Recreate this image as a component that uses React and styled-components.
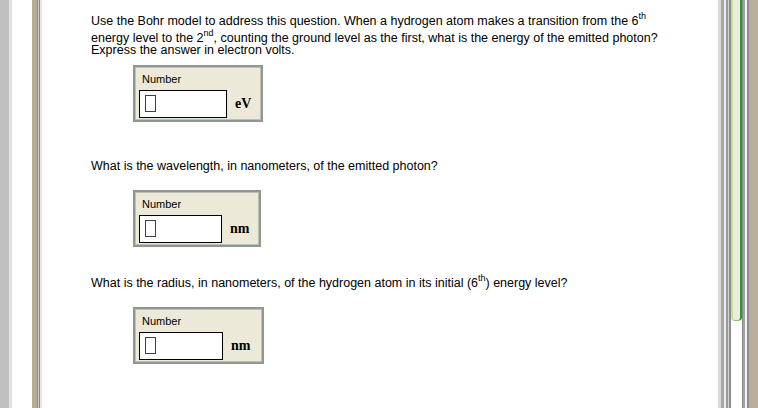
import React from "react";
import styled, { createGlobalStyle } from "styled-components";

const GlobalStyle = createGlobalStyle`
  html, body {
    margin: 0;
    padding: 0;
    background: #ffffff;
    overflow: hidden;
  }
`;

const questions = [
  {
    id: 1,
    text: (
      <>
        Use the Bohr model to address this question. When a hydrogen atom makes a
        transition from the 6<sup>th</sup>
        <br />
        energy level to the 2<sup>nd</sup>, counting the ground level as the first,
        what is the energy of the emitted photon?
        <br />
        Express the answer in electron volts.
      </>
    ),
    unit: "eV",
    top: 10,
    gap: 9,
    boxWidth: 130,
    inputWidth: 88,
  },
  {
    id: 2,
    text: <>What is the wavelength, in nanometers, of the emitted photon?</>,
    unit: "nm",
    top: 38,
    gap: 18,
    boxWidth: 128,
    inputWidth: 83,
  },
  {
    id: 3,
    text: (
      <>
        What is the radius, in nanometers, of the hydrogen atom in its initial (6
        <sup>th</sup>) energy level?
      </>
    ),
    unit: "nm",
    top: 25,
    gap: 18,
    boxWidth: 131,
    inputWidth: 84,
  },
];

function App() {
  return (
    <>
      <GlobalStyle />
      <Window>
        <LeftChrome />
        <Content>
          {questions.map((q) => (
            <Section key={q.id} $top={q.top}>
              <Question>{q.text}</Question>
              <AnswerBox $gap={q.gap} $width={q.boxWidth}>
                <Label>Number</Label>
                <AnswerRow>
                  <Input $width={q.inputWidth}>
                    <Caret />
                  </Input>
                  <Unit>{q.unit}</Unit>
                </AnswerRow>
              </AnswerBox>
            </Section>
          ))}
        </Content>
        <RightChrome>
          <OuterStripes />
          <Track>
            <Thumb />
          </Track>
          <InnerStripes />
        </RightChrome>
      </Window>
    </>
  );
}

export default App;

const Window = styled.div`
  display: flex;
  width: 758px;
  height: 408px;
  overflow: hidden;
  background: #ffffff;
`;

const LeftChrome = styled.div`
  flex: 0 0 42px;
  height: 100%;
  background: linear-gradient(
    90deg,
    #c0c0c0 0,
    #c0c0c0 9px,
    #e2e2e2 9px,
    #e2e2e2 12px,
    #ffffff 12px,
    #ffffff 32px,
    #b7ab94 32px,
    #b7ab94 37px,
    #8c8c8c 37px,
    #8c8c8c 38px,
    #cfcfcf 38px,
    #cfcfcf 39px,
    #7c8a98 39px,
    #7c8a98 40px,
    #e6e6e6 40px,
    #e6e6e6 42px
  );
`;

const Content = styled.div`
  flex: 1;
  padding-left: 49px;
  font-family: "Liberation Sans", Arial, sans-serif;
  font-size: 12.5px;
  color: #000000;
`;

const Section = styled.div`
  padding-top: ${(p) => p.$top}px;
`;

const Question = styled.div`
  line-height: 12px;
  white-space: nowrap;

  sup {
    font-size: 9px;
    line-height: 12px;
    vertical-align: 6px;
  }
`;

const AnswerBox = styled.div`
  box-sizing: border-box;
  width: ${(p) => p.$width}px;
  height: 57px;
  margin: ${(p) => p.$gap}px 0 0 42px;
  padding: 6px 0 0 4px;
  background: #ece9d8;
  border: 2px solid #8e9792;
  box-shadow: inset 0 0 0 1px #bcc0b8;
`;

const Label = styled.div`
  font-size: 11px;
  line-height: 13px;
  padding-left: 3px;
  color: #000000;
`;

const AnswerRow = styled.div`
  display: flex;
  align-items: center;
  margin-top: 4px;
`;

const Input = styled.div`
  box-sizing: border-box;
  width: ${(p) => p.$width}px;
  height: 28px;
  background: #ffffff;
  border: 1px solid #000000;
  padding: 4px 0 0 5px;
`;

const Caret = styled.div`
  box-sizing: border-box;
  width: 11px;
  height: 17px;
  border: 1px solid #404040;
  background: #ffffff;
`;

const Unit = styled.span`
  margin-left: 8px;
  font-family: "Liberation Serif", "Times New Roman", serif;
  font-weight: bold;
  font-size: 14px;
`;

const RightChrome = styled.div`
  flex: 0 0 40px;
  display: flex;
  height: 100%;
`;

const OuterStripes = styled.div`
  flex: 0 0 13px;
  background: linear-gradient(
    90deg,
    #dadada 0,
    #dadada 3px,
    #a6a6a6 3px,
    #a6a6a6 6px,
    #ededed 6px,
    #ededed 8px,
    #9b9b9b 8px,
    #9b9b9b 10px,
    #d4d4d4 10px,
    #d4d4d4 11px,
    #8f8f8f 11px,
    #8f8f8f 13px
  );
`;

const Track = styled.div`
  flex: 0 0 12px;
  box-sizing: border-box;
  background: #ffffff;
  border-right: 1px solid #8a8a8a;
`;

const Thumb = styled.div`
  box-sizing: border-box;
  height: 321px;
  background: #eeecdc;
  border-left: 2px solid #bfe29c;
  border-right: 2px solid #2a9a2a;
  border-bottom: 1px solid #8ccc70;
  border-radius: 0 0 4px 4px;
`;

const InnerStripes = styled.div`
  flex: 0 0 15px;
  background: linear-gradient(
    90deg,
    #a2a2a2 0,
    #a2a2a2 2px,
    #f4f4f4 2px,
    #f4f4f4 4px,
    #8e8e8e 4px,
    #8e8e8e 6px,
    #b9ae9b 6px,
    #b9ae9b 15px
  );
`;
